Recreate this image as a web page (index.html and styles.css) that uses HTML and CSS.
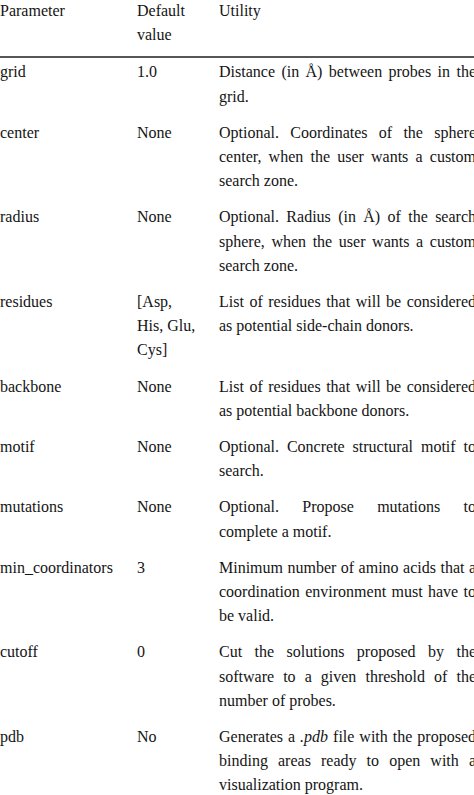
FILE: index.html
```html
<!DOCTYPE html>
<html>
<head>
<meta charset="utf-8">
<link rel="stylesheet" href="styles.css">
</head>
<body>
<div class="table">
  <div class="row head">
    <div class="c1">Parameter</div>
    <div class="c2">Default<br>value</div>
    <div class="c3">Utility</div>
  </div>
  <div class="rule"></div>
  <div class="row">
    <div class="c1">grid</div>
    <div class="c2">1.0</div>
    <div class="c3"><span class="j">Distance (in Å) between probes in the</span><span class="l">grid.</span></div>
  </div>
  <div class="row">
    <div class="c1">center</div>
    <div class="c2">None</div>
    <div class="c3"><span class="j">Optional. Coordinates of the sphere</span><span class="j">center, when the user wants a custom</span><span class="l">search zone.</span></div>
  </div>
  <div class="row">
    <div class="c1">radius</div>
    <div class="c2">None</div>
    <div class="c3"><span class="j">Optional. Radius (in Å) of the search</span><span class="j">sphere, when the user wants a custom</span><span class="l">search zone.</span></div>
  </div>
  <div class="row">
    <div class="c1">residues</div>
    <div class="c2"><span class="l">[Asp,</span><span class="l">His, Glu,</span><span class="l">Cys]</span></div>
    <div class="c3"><span class="j">List of residues that will be considered</span><span class="l">as potential side-chain donors.</span></div>
  </div>
  <div class="row">
    <div class="c1">backbone</div>
    <div class="c2">None</div>
    <div class="c3"><span class="j">List of residues that will be considered</span><span class="l">as potential backbone donors.</span></div>
  </div>
  <div class="row">
    <div class="c1">motif</div>
    <div class="c2">None</div>
    <div class="c3"><span class="j">Optional. Concrete structural motif to</span><span class="l">search.</span></div>
  </div>
  <div class="row">
    <div class="c1">mutations</div>
    <div class="c2">None</div>
    <div class="c3"><span class="j">Optional. Propose mutations to</span><span class="l">complete a motif.</span></div>
  </div>
  <div class="row">
    <div class="c1">min_coordinators</div>
    <div class="c2">3</div>
    <div class="c3"><span class="j">Minimum number of amino acids that a</span><span class="j">coordination environment must have to</span><span class="l">be valid.</span></div>
  </div>
  <div class="row">
    <div class="c1">cutoff</div>
    <div class="c2">0</div>
    <div class="c3"><span class="j">Cut the solutions proposed by the</span><span class="j">software to a given threshold of the</span><span class="l">number of probes.</span></div>
  </div>
  <div class="row">
    <div class="c1">pdb</div>
    <div class="c2">No</div>
    <div class="c3"><span class="j">Generates a <i>.pdb</i> file with the proposed</span><span class="j">binding areas ready to open with a</span><span class="l">visualization program.</span></div>
  </div>
</div>
</body>
</html>
```

FILE: styles.css
```css
html, body {
  margin: 0;
  padding: 0;
  overflow: hidden;
  background: #ffffff;
}

body {
  font-family: "Liberation Serif", "Times New Roman", serif;
  font-size: 16px;
  line-height: 24.2px;
  color: #141414;
}

.table {
  margin-top: -1px;
  width: 476px;
}

.row {
  display: grid;
  grid-template-columns: 137px 82px 257px;
  padding: 2px 0 10px 0;
}

.row.head {
  padding: 0 0 9px 0;
}

.rule {
  height: 2px;
  background: #575757;
}

.c1, .c2, .c3 {
  white-space: nowrap;
}

.j {
  display: block;
  text-align: justify;
  text-align-last: justify;
}

.l {
  display: block;
}
```
